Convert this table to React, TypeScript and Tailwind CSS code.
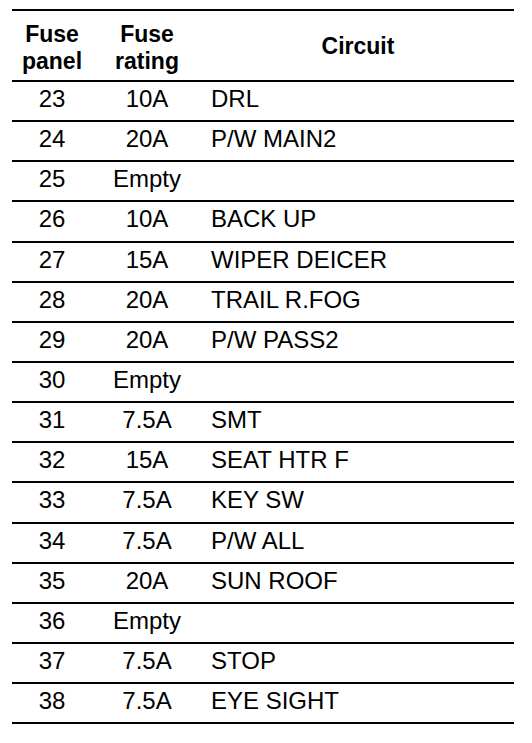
const rows: [string, string, string][] = [
  ["23", "10A", "DRL"],
  ["24", "20A", "P/W MAIN2"],
  ["25", "Empty", ""],
  ["26", "10A", "BACK UP"],
  ["27", "15A", "WIPER DEICER"],
  ["28", "20A", "TRAIL R.FOG"],
  ["29", "20A", "P/W PASS2"],
  ["30", "Empty", ""],
  ["31", "7.5A", "SMT"],
  ["32", "15A", "SEAT HTR F"],
  ["33", "7.5A", "KEY SW"],
  ["34", "7.5A", "P/W ALL"],
  ["35", "20A", "SUN ROOF"],
  ["36", "Empty", ""],
  ["37", "7.5A", "STOP"],
  ["38", "7.5A", "EYE SIGHT"],
];

export default function App() {
  return (
    <div className="w-[532px] h-[743px] bg-white pt-[9px] pl-[12px] font-['Liberation_Sans',Arial,sans-serif] text-black">
      <table className="w-[502px] border-collapse table-fixed">
        <colgroup>
          <col className="w-[80px]" />
          <col className="w-[110px]" />
          <col className="w-[312px]" />
        </colgroup>
        <thead>
          <tr className="border-t-2 border-b-2 border-black h-[71px] text-[23px] leading-[27px] font-bold">
            <th className="text-center align-middle p-0 pt-[4px]">
              Fuse
              <br />
              panel
            </th>
            <th className="text-center align-middle p-0 pt-[4px]">
              Fuse
              <br />
              rating
            </th>
            <th className="text-center align-middle p-0 pt-[2px]">Circuit</th>
          </tr>
        </thead>
        <tbody className="text-[24px] leading-none">
          {rows.map(([panel, rating, circuit]) => (
            <tr key={panel} className="border-b-2 border-black h-[40.15px]">
              <td className="text-center align-middle p-0 pb-[4px]">{panel}</td>
              <td className="text-center align-middle p-0 pb-[4px]">{rating}</td>
              <td className="text-left align-middle p-0 pl-[9px] pb-[4px]">{circuit}</td>
            </tr>
          ))}
        </tbody>
      </table>
    </div>
  );
}
